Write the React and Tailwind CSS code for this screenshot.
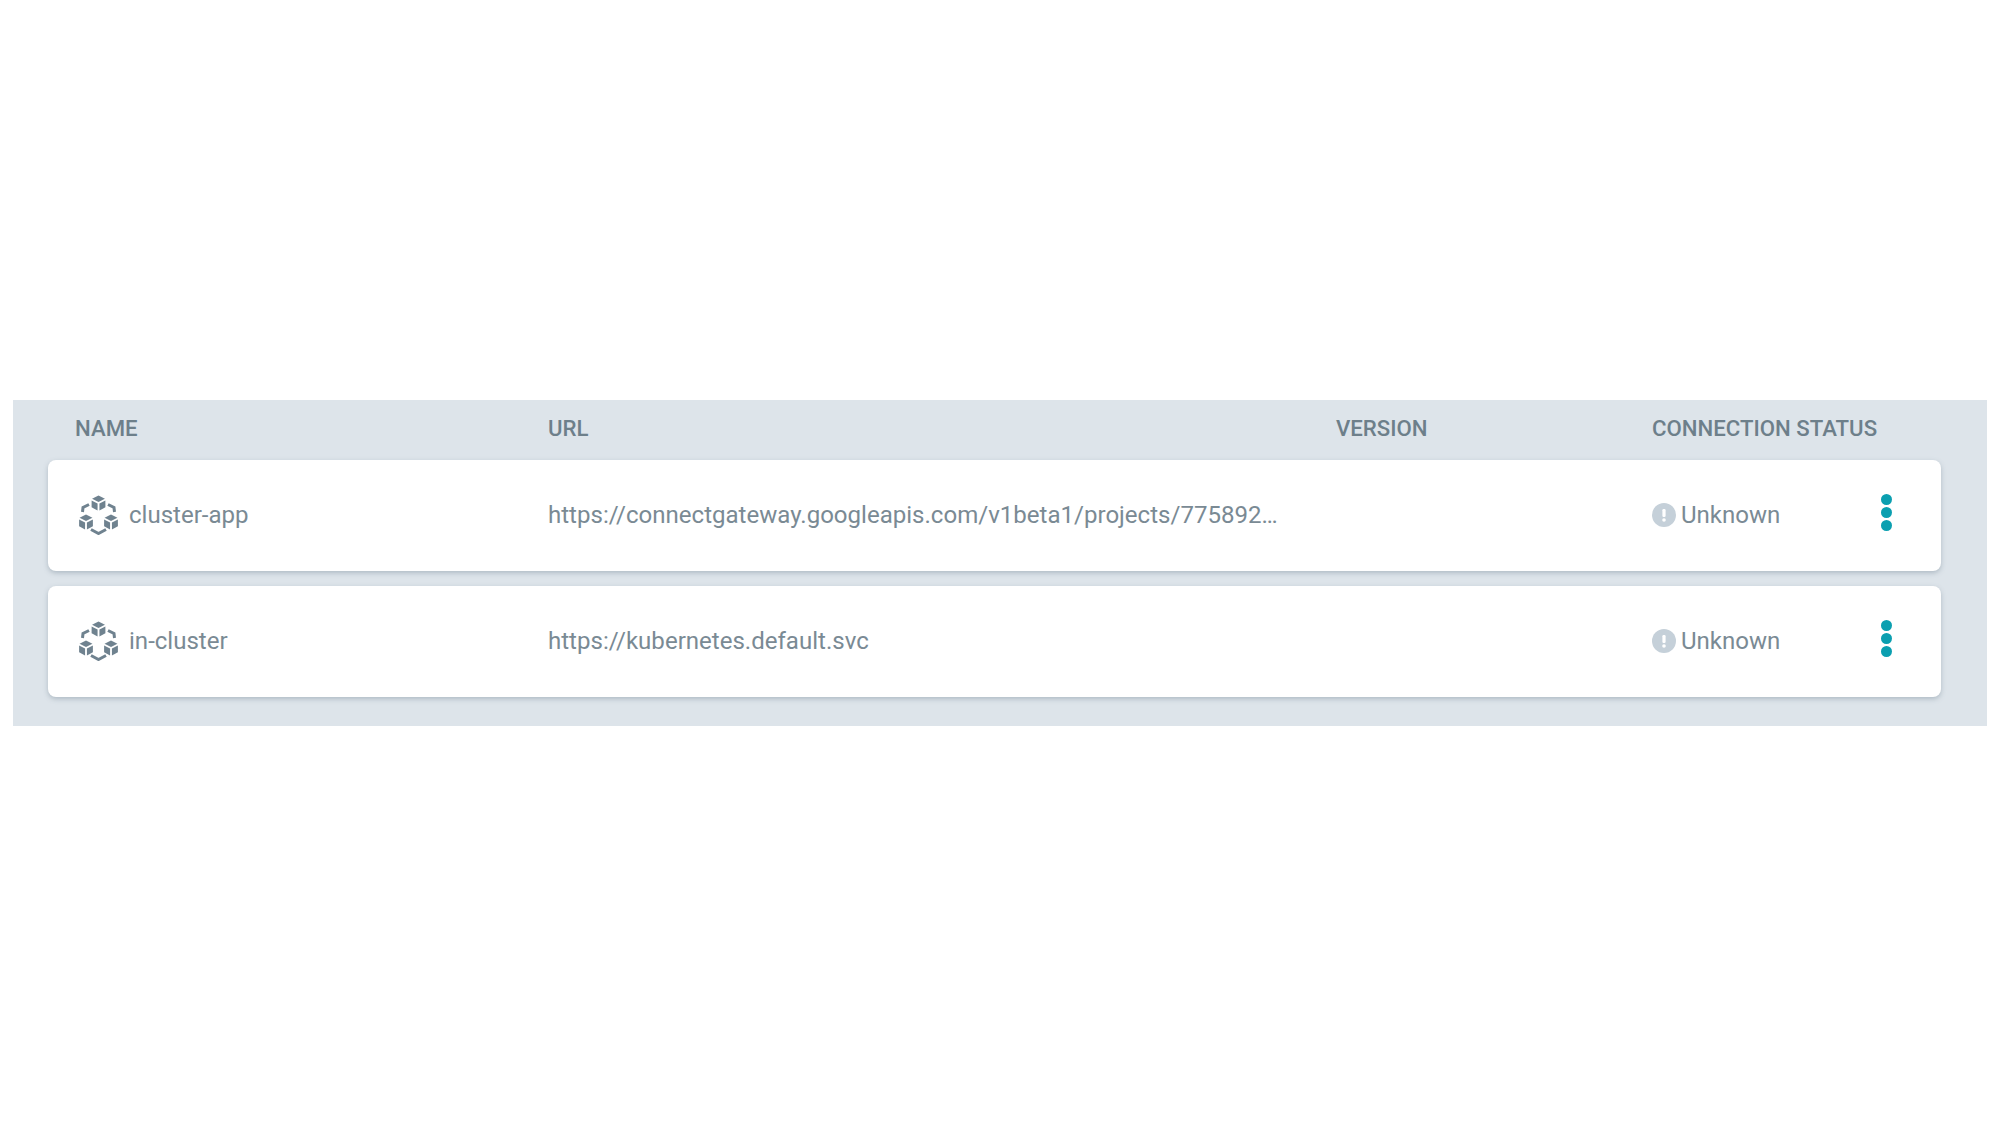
function ClusterIcon() {
  const cube = (x, y) => (
    <g transform={`translate(${x} ${y}) scale(1.15)`} fill="#6f828f">
      <path d="M0 -6.6 L5.6 -3.6 L0 -0.8 L-5.6 -3.6 Z" />
      <path d="M-6 -2.2 L-0.8 0.5 L-0.8 6.6 L-6 3.8 Z" />
      <path d="M6 -2.2 L0.8 0.5 L0.8 6.6 L6 3.8 Z" />
    </g>
  );
  return (
    <svg viewBox="0 0 41 40" className="w-[41px] h-10 shrink-0">
      {cube(20.5, 8)}
      {cube(8, 27)}
      {cube(33, 27)}
      <g fill="none" stroke="#6f828f" strokeWidth="3">
        <path d="M11 9.5 L5 12.5 L4.5 17" />
        <path d="M30 9.5 L36 12.5 L36.5 17" />
        <path d="M13 34.5 L20.5 38.5 L28 34.5" />
      </g>
    </svg>
  );
}

function StatusIcon() {
  return (
    <span className="w-6 h-6 rounded-full bg-[#c5d0d9] flex items-center justify-center shrink-0">
      <svg viewBox="0 0 24 24" className="w-6 h-6" fill="#ffffff">
        <rect x="10.4" y="6" width="3.2" height="8" rx="1.2" />
        <circle cx="12" cy="17" r="1.8" />
      </svg>
    </span>
  );
}

function Row({ name, url }) {
  return (
    <div className="h-[111px] pb-px rounded-lg bg-white shadow-[0_2px_5px_rgba(90,110,125,0.35)] flex items-center text-[24.05px] text-[#7a8a94]">
      <div className="w-[500px] pl-[30px] flex items-center gap-[10px]">
        <ClusterIcon />
        <span>{name}</span>
      </div>
      <div className="w-[1104px]">
        <span>{url}</span>
      </div>
      <div className="w-[229px] flex items-center gap-[5px]">
        <StatusIcon />
        <span>Unknown</span>
      </div>
      <div className="flex flex-col items-center gap-[2px] pb-[5px]">
        <span className="w-[11px] h-[11px] rounded-full bg-[#0b9fb0]" />
        <span className="w-[11px] h-[11px] rounded-full bg-[#0b9fb0]" />
        <span className="w-[11px] h-[11px] rounded-full bg-[#0b9fb0]" />
      </div>
    </div>
  );
}

export default function App() {
  return (
    <main className="min-h-[1125px] bg-white pt-[400px] px-[13px] font-['Roboto',sans-serif]">
      <div className="bg-[#dde4ea] pl-[35px] pr-[46px] pb-[29px]">
        <div className="h-[60px] pb-[3px] flex items-center text-[22.2px] font-medium text-[#6d7f8a]">
          <div className="w-[500px] pl-[27px]">NAME</div>
          <div className="w-[788px]">URL</div>
          <div className="w-[316px]">VERSION</div>
          <div>CONNECTION STATUS</div>
        </div>
        <div className="flex flex-col gap-[15px]">
          <Row name="cluster-app" url="https://connectgateway.googleapis.com/v1beta1/projects/775892…" />
          <Row name="in-cluster" url="https://kubernetes.default.svc" />
        </div>
      </div>
    </main>
  );
}
